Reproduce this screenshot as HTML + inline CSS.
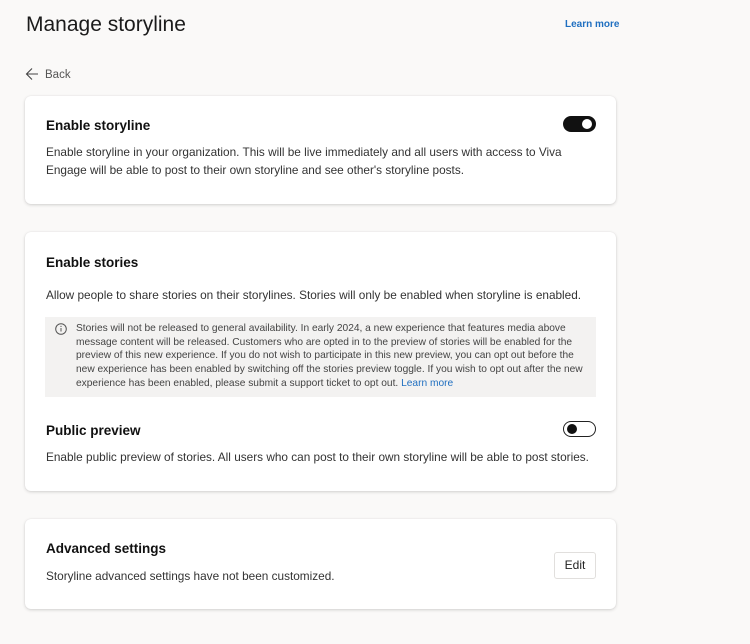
<!DOCTYPE html>
<html><head><meta charset="utf-8"><style>
*{margin:0;padding:0;box-sizing:border-box}
body{width:750px;height:644px;background:#faf9f8;font-family:"Liberation Sans",sans-serif;color:#242424;position:relative;overflow:hidden}
.a{position:absolute;white-space:nowrap}
.card{position:absolute;left:25px;width:591px;background:#fff;border-radius:6px;box-shadow:0 1px 3px rgba(0,0,0,.16),0 0 1px rgba(0,0,0,.1)}
h1{font-weight:400;font-size:21px;color:#1b1b1b}
.t{font-weight:700;font-size:13.5px;color:#111}
.b{font-size:11.8px;color:#333;line-height:18px}
.tg{position:absolute;width:33px;height:16px;border-radius:8px}
</style></head><body>
<h1 class="a" style="left:26px;top:13px">Manage storyline</h1>
<div class="a" style="left:565px;top:19px;font-size:10px;color:#1f6fc0;font-weight:700">Learn more</div>
<svg class="a" style="left:25px;top:67px" width="14" height="14" viewBox="0 0 14 14"><path d="M7 1.5L1.5 7L7 12.5M1.5 7H13" stroke="#444" stroke-width="1.1" fill="none"/></svg>
<div class="a" style="left:45px;top:69px;font-size:11.5px;color:#555">Back</div>

<div class="card" style="top:96px;height:108px">
<div class="a t" style="left:21px;top:22px">Enable storyline</div>
<div class="tg" style="left:538px;top:20px;background:#111"><div style="position:absolute;right:4px;top:3px;width:10px;height:10px;border-radius:50%;background:#fff"></div></div>
<div class="a b" style="left:21px;top:47px">Enable storyline in your organization. This will be live immediately and all users with access to Viva<br>Engage will be able to post to their own storyline and see other's storyline posts.</div>
</div>

<div class="card" style="top:232px;height:259px">
<div class="a t" style="left:21px;top:23px">Enable stories</div>
<div class="a b" style="left:21px;top:54px">Allow people to share stories on their storylines. Stories will only be enabled when storyline is enabled.</div>
<div style="position:absolute;left:20px;top:85px;width:551px;height:80px;background:#f3f2f1"></div>
<svg class="a" style="left:30px;top:91px" width="12" height="12" viewBox="0 0 12 12"><circle cx="6" cy="6" r="5.3" stroke="#555" fill="none"/><path d="M6 5v3.5" stroke="#555"/><circle cx="6" cy="3.4" r=".6" fill="#555"/></svg>
<div class="a" style="left:51px;top:90px;font-size:10.2px;color:#444;line-height:13.7px">Stories will not be released to general availability. In early 2024, a new experience that features media above<br>message content will be released. Customers who are opted in to the preview of stories will be enabled for the<br>preview of this new experience. If you do not wish to participate in this new preview, you can opt out before the<br>new experience has been enabled by switching off the stories preview toggle. If you wish to opt out after the new<br>experience has been enabled, please submit a support ticket to opt out. <span style="color:#1f6fc0">Learn more</span></div>
<div class="a t" style="left:21px;top:191px">Public preview</div>
<div class="tg" style="left:538px;top:189px;border:1px solid #222;background:#fff"><div style="position:absolute;left:3px;top:2px;width:10px;height:10px;border-radius:50%;background:#111"></div></div>
<div class="a b" style="left:21px;top:216px">Enable public preview of stories. All users who can post to their own storyline will be able to post stories.</div>
</div>

<div class="card" style="top:519px;height:90px">
<div class="a t" style="left:21px;top:22px">Advanced settings</div>
<div class="a b" style="left:21px;top:48px">Storyline advanced settings have not been customized.</div>
<div style="position:absolute;left:529px;top:33px;width:42px;height:27px;border:1px solid #e1dfdd;border-radius:3px;font-size:12px;color:#222;text-align:center;line-height:25px">Edit</div>
</div>
</body></html>
